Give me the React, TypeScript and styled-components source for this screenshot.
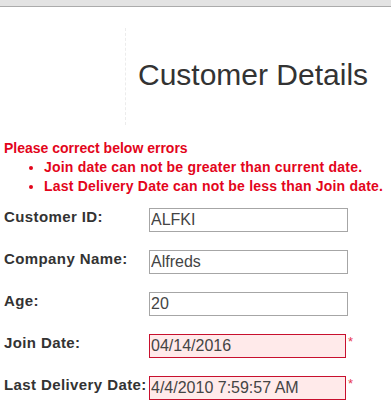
import React from 'react';
import styled, { createGlobalStyle } from 'styled-components';

const GlobalStyle = createGlobalStyle`
  html, body {
    margin: 0;
    padding: 0;
    background: #fff;
  }
  body {
    font-family: 'Liberation Sans', Arial, sans-serif;
    color: #333;
  }
`;

const ERRORS = [
  'Join date can not be greater than current date.',
  'Last Delivery Date can not be less than Join date.',
];

const FIELDS = [
  { label: 'Customer ID:', value: 'ALFKI', invalid: false },
  { label: 'Company Name:', value: 'Alfreds', invalid: false },
  { label: 'Age:', value: '20', invalid: false },
  { label: 'Join Date:', value: '04/14/2016', invalid: true },
  { label: 'Last Delivery Date:', value: '4/4/2010 7:59:57 AM', invalid: true },
  { label: '', value: '', invalid: false },
];

function App() {
  return (
    <Page>
      <GlobalStyle />
      <TopBar />
      <Header>
        <HeaderSpacer />
        <Title>Customer Details</Title>
      </Header>
      <Summary>
        <SummaryTitle>Please correct below errors</SummaryTitle>
        <ErrorList>
          {ERRORS.map((msg) => (
            <li key={msg}>{msg}</li>
          ))}
        </ErrorList>
      </Summary>
      <Form>
        {FIELDS.map((f, idx) => (
          <Row key={idx}>
            <Label>{f.label}</Label>
            <Input $invalid={f.invalid} defaultValue={f.value} readOnly />
            {f.invalid && <Required>*</Required>}
          </Row>
        ))}
      </Form>
    </Page>
  );
}

const Page = styled.div`
  width: 391px;
  height: 418px;
  overflow: hidden;
`;

const TopBar = styled.div`
  height: 6px;
  background: #e3e3e3;
  border-bottom: 1px solid #ababab;
`;

const Header = styled.div`
  display: flex;
  align-items: center;
  height: 97px;
  margin-top: 21px;
`;

const HeaderSpacer = styled.div`
  width: 125px;
  height: 100%;
  border-right: 1px dashed #ececec;
`;

const Title = styled.h1`
  margin: 0 0 3px 12px;
  font-size: 30px;
  line-height: 34px;
  font-weight: normal;
  color: #333;
`;

const Summary = styled.div`
  margin-top: 14px;
  padding-left: 4px;
  color: #e3051b;
  font-size: 14px;
  line-height: 19px;
  font-weight: bold;
`;

const SummaryTitle = styled.div``;

const ErrorList = styled.ul`
  margin: 0;
  padding-left: 40px;
  list-style: disc;

  li {
    letter-spacing: 0.2px;
  }
`;

const Form = styled.div`
  display: flex;
  flex-direction: column;
  gap: 18px;
  margin-top: 12px;
  padding-left: 4px;
`;

const Row = styled.div`
  display: flex;
  align-items: flex-start;
  height: 24px;
`;

const Label = styled.div`
  width: 145px;
  flex-shrink: 0;
  font-size: 15px;
  line-height: 18px;
  font-weight: bold;
  letter-spacing: 0.4px;
  color: #333;
  white-space: nowrap;
`;

const Input = styled.input<{ $invalid: boolean }>`
  box-sizing: border-box;
  width: ${(p) => (p.$invalid ? '197px' : '199px')};
  height: 24px;
  margin: 0;
  padding: 0 1px;
  font-family: 'Liberation Sans', Arial, sans-serif;
  font-size: 16px;
  color: #444;
  background: ${(p) => (p.$invalid ? '#ffeaea' : '#fff')};
  border: 1px solid ${(p) => (p.$invalid ? '#c8102e' : '#a6a6a6')};
  border-radius: 0;
  outline: none;
`;

const Required = styled.span`
  margin-left: 2px;
  margin-top: 1px;
  font-size: 13px;
  line-height: 13px;
  color: #e8384f;
`;

export default App;
